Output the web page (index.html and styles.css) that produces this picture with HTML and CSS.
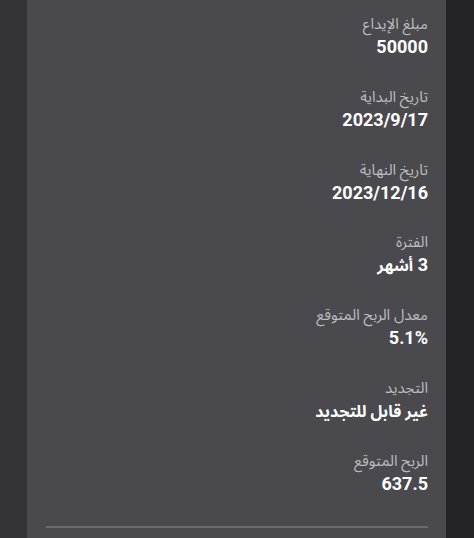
FILE: index.html
```html
<!DOCTYPE html>
<html lang="ar" dir="rtl">
<head>
<meta charset="utf-8">
<link rel="stylesheet" href="styles.css">
</head>
<body>
<div class="screen">
  <div class="side side-right"></div>
  <main class="panel">
    <div class="item"><div class="label">مبلغ الإيداع</div><div class="value">50000</div></div>
    <div class="item"><div class="label">تاريخ البداية</div><div class="value">2023/9/17</div></div>
    <div class="item"><div class="label">تاريخ النهاية</div><div class="value">2023/12/16</div></div>
    <div class="item"><div class="label">الفترة</div><div class="value">3 <span class="ar">أشهر</span></div></div>
    <div class="item"><div class="label">معدل الربح المتوقع</div><div class="value">5.1%</div></div>
    <div class="item"><div class="label">التجديد</div><div class="value"><span class="ar">غير قابل للتجديد</span></div></div>
    <div class="item"><div class="label">الربح المتوقع</div><div class="value">637.5</div></div>
    <div class="divider"></div>
  </main>
  <div class="side side-left"></div>
</div>
</body>
</html>
```
FILE: styles.css
```css
html, body {
  margin: 0;
  padding: 0;
  height: 100%;
  overflow: hidden;
}
body {
  background: #2a292c;
  font-family: Roboto, "Noto Sans Arabic", sans-serif;
}
.screen {
  display: flex;
  height: 538px;
}
.side-left {
  width: 27px;
  background: #343337;
}
.side-right {
  width: 28px;
  background: #232225;
}
.panel {
  flex: 1;
  background: #4a494d;
  padding: 14px 18px 0 19px;
  display: flex;
  flex-direction: column;
  gap: 27.8px;
}
.item {
  display: flex;
  flex-direction: column;
  text-align: right;
}
.label {
  font-size: 15px;
  line-height: 21px;
  height: 21px;
  color: #bdbcc0;
}
.value {
  font-size: 18px;
  line-height: 24px;
  height: 24px;
  font-weight: 700;
  color: #ffffff;
}
.ar {
  font-size: 16px;
}
.divider {
  height: 2px;
  background: #6a696d;
  margin-top: 2px;
}
```
